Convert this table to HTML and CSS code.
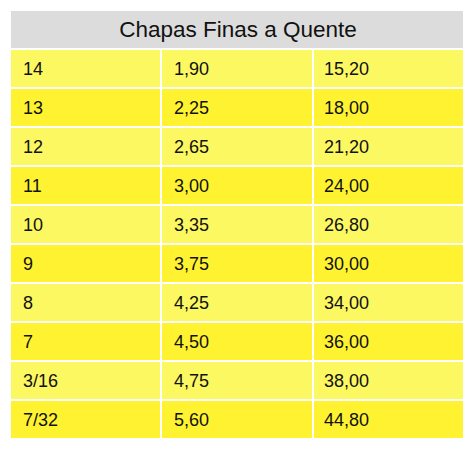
FILE: index.html
```html
<!DOCTYPE html>
<html lang="pt">
<head>
<meta charset="utf-8">
<title>Chapas Finas a Quente</title>
<link rel="stylesheet" href="styles.css">
</head>
<body>
<div class="table">
  <div class="head">Chapas Finas a Quente</div>
  <div class="row light"><div class="cell">14</div><div class="cell">1,90</div><div class="cell c3">15,20</div></div>
  <div class="row dark"><div class="cell">13</div><div class="cell">2,25</div><div class="cell c3">18,00</div></div>
  <div class="row light"><div class="cell">12</div><div class="cell">2,65</div><div class="cell c3">21,20</div></div>
  <div class="row dark"><div class="cell">11</div><div class="cell">3,00</div><div class="cell c3">24,00</div></div>
  <div class="row light"><div class="cell">10</div><div class="cell">3,35</div><div class="cell c3">26,80</div></div>
  <div class="row dark"><div class="cell">9</div><div class="cell">3,75</div><div class="cell c3">30,00</div></div>
  <div class="row light"><div class="cell">8</div><div class="cell">4,25</div><div class="cell c3">34,00</div></div>
  <div class="row dark"><div class="cell">7</div><div class="cell">4,50</div><div class="cell c3">36,00</div></div>
  <div class="row light"><div class="cell">3/16</div><div class="cell">4,75</div><div class="cell c3">38,00</div></div>
  <div class="row dark"><div class="cell">7/32</div><div class="cell">5,60</div><div class="cell c3">44,80</div></div>
</div>
</body>
</html>
```
FILE: styles.css
```css
html, body {
  margin: 0;
  padding: 0;
  background: #ffffff;
}
body {
  padding: 11px 0 0 11px;
  font-family: "Liberation Sans", Arial, sans-serif;
  color: #111111;
}
.table {
  width: 452px;
  display: flex;
  flex-direction: column;
  gap: 2px;
}
.head {
  height: 37px;
  background: #dcdcdc;
  font-size: 22.5px;
  display: flex;
  align-items: center;
  justify-content: center;
  padding-left: 2px;
}
.row {
  display: grid;
  grid-template-columns: 149px 150px 149px;
  column-gap: 2px;
  height: 37px;
}
.cell {
  display: flex;
  align-items: center;
  padding-left: 12px;
  padding-top: 1px;
  font-size: 18px;
}
.cell.c3 {
  padding-left: 10px;
}
.light .cell {
  background: #fcf862;
}
.dark .cell {
  background: #fff331;
}
```
